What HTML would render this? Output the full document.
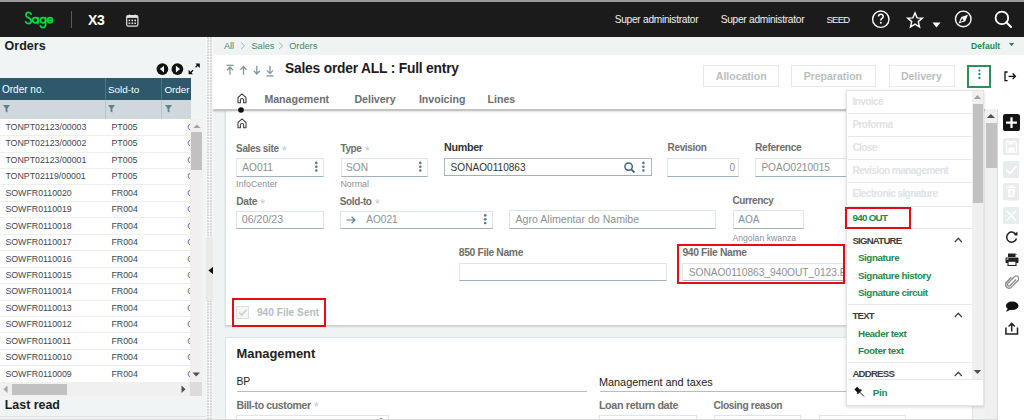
<!DOCTYPE html>
<html><head><meta charset="utf-8"><style>
html,body{margin:0;padding:0;}
body{width:1024px;height:420px;overflow:hidden;position:relative;background:#fff;font-family:"Liberation Sans", sans-serif;}
body>div{position:absolute;white-space:nowrap;}
</style></head><body>
<div style="left:0px;top:0px;width:1024px;height:2px;background:#9a9a9a;"></div>
<div style="left:0px;top:2px;width:1024px;height:34.5px;background:#1b1b1b;"></div>
<svg style="position:absolute;left:24px;top:11px" width="32" height="19" viewBox="0 0 32 19"><g fill="none" stroke="#00d83a" stroke-width="1.75" stroke-linecap="round"><path d="M7.1 3.1 C6.6 2 5.6 1.4 4.5 1.4 C3 1.4 1.9 2.4 1.9 3.9 C1.9 5.6 3.3 6.3 4.6 6.9 C6.2 7.6 7.2 8.5 7.2 10.1 C7.2 11.6 6 12.6 4.5 12.6 C3 12.6 2 11.8 1.6 10.7"/><circle cx="11.3" cy="9.3" r="2.6"/><path d="M13.9 6.6 L13.9 12.6"/><circle cx="19" cy="9.3" r="2.6"/><path d="M21.6 6.6 L21.6 13.8 C21.6 15.5 20.4 16.6 18.9 16.6 C17.6 16.6 16.7 15.9 16.3 14.9"/><path d="M23.7 9.4 L28.6 9.4 C28.6 7.8 27.5 6.7 26.1 6.7 C24.6 6.7 23.5 7.9 23.5 9.3 C23.5 10.8 24.6 11.9 26.1 11.9 C27 11.9 27.8 11.5 28.3 10.8"/></g></svg>
<div style="left:71px;top:11px;width:1.2px;height:17px;background:#5a5a5a;"></div>
<div style="left:88.00px;top:13.05px;font-size:14px;line-height:14px;color:#ffffff;font-weight:700;letter-spacing:-0.3px;">X3</div>
<svg style="position:absolute;left:125.5px;top:13.5px" width="13" height="13" viewBox="0 0 13 13"><rect x="0.7" y="1.6" width="11.2" height="10.6" rx="1.6" fill="none" stroke="#e2e2e2" stroke-width="1.2"/><rect x="0.7" y="1.6" width="11.2" height="2.3" fill="#e2e2e2"/><circle cx="3.5" cy="1.3" r="0.9" fill="#e2e2e2"/><circle cx="9.1" cy="1.3" r="0.9" fill="#e2e2e2"/><g fill="#e2e2e2"><rect x="2.6" y="5.6" width="1.6" height="1.6"/><rect x="5.5" y="5.6" width="1.6" height="1.6"/><rect x="8.4" y="5.6" width="1.6" height="1.6"/><rect x="2.6" y="8.5" width="1.6" height="1.6"/><rect x="5.5" y="8.5" width="1.6" height="1.6"/><rect x="8.4" y="8.5" width="1.6" height="1.6"/></g></svg>
<div style="left:614.70px;top:14.67px;font-size:10.2px;line-height:10.2px;color:#f2f2f2;font-weight:400;letter-spacing:-0.28px;">Super administrator</div>
<div style="left:720.70px;top:14.67px;font-size:10.2px;line-height:10.2px;color:#f2f2f2;font-weight:400;letter-spacing:-0.28px;">Super administrator</div>
<div style="left:826.40px;top:15.17px;font-size:9.6px;line-height:9.6px;color:#f2f2f2;font-weight:400;letter-spacing:-0.75px;">SEED</div>
<svg style="position:absolute;left:871px;top:10px" width="20" height="20" viewBox="0 0 20 20"><circle cx="9.8" cy="9.2" r="8.2" fill="none" stroke="#fff" stroke-width="1.4"/><path d="M7.4 6.6 C7.4 5.1 8.5 4.3 9.8 4.3 C11.2 4.3 12.2 5.2 12.2 6.5 C12.2 7.6 11.5 8.1 10.8 8.6 C10.1 9.1 9.8 9.5 9.8 10.6" stroke="#fff" stroke-width="1.5" fill="none"/><circle cx="9.8" cy="12.7" r="1" fill="#fff"/></svg>
<svg style="position:absolute;left:904.8px;top:9.8px" width="20" height="20" viewBox="0 0 20 20"><path d="M10 1.6 L12.2 7.1 L17.9 7.4 L13.5 11.1 L14.9 16.9 L10 13.8 L5.1 16.9 L6.5 11.1 L2.1 7.4 L7.8 7.1 Z" transform="translate(10,10.2) scale(0.93) translate(-10,-9.6)" fill="none" stroke="#fff" stroke-width="1.5" stroke-linejoin="miter"/></svg>
<svg style="position:absolute;left:931.5px;top:21.5px" width="9" height="6" viewBox="0 0 9 6"><path d="M0.5 0.5 L8.5 0.5 L4.5 5.5 Z" fill="#fff"/></svg>
<svg style="position:absolute;left:953px;top:10px" width="20" height="20" viewBox="0 0 20 20"><circle cx="10.25" cy="8.9" r="7.8" fill="none" stroke="#fff" stroke-width="1.4"/><path d="M15 4.8 L12.2 11.2 L5.5 13.5 L8.3 7.1 Z" fill="#fff"/><path d="M9.1 8.6 L10.7 10.4 L7.1 11.9 Z" fill="#1b1b1b"/></svg>
<svg style="position:absolute;left:993px;top:9px" width="22" height="22" viewBox="0 0 22 22"><circle cx="8.9" cy="8.9" r="6.3" fill="none" stroke="#fff" stroke-width="1.8"/><path d="M13.3 13.3 L18 18" stroke="#fff" stroke-width="2" stroke-linecap="round"/></svg>
<div style="left:0px;top:36.5px;width:206px;height:383.5px;background:#f1f4f5;"></div>
<div style="left:4.60px;top:40.32px;font-size:12.5px;line-height:12.5px;color:#1c1c1c;font-weight:700;letter-spacing:0px;">Orders</div>
<svg style="position:absolute;left:156px;top:62.5px" width="13" height="13" viewBox="0 0 13 13"><circle cx="6.4" cy="6.1" r="5.9" fill="#111"/><path d="M8 2.8 L3.9 6.1 L8 9.4 Z" fill="#fff"/></svg>
<svg style="position:absolute;left:170.6px;top:62.5px" width="13" height="13" viewBox="0 0 13 13"><circle cx="6.4" cy="6.1" r="5.9" fill="#111"/><path d="M4.9 2.8 L9 6.1 L4.9 9.4 Z" fill="#fff"/></svg>
<svg style="position:absolute;left:188px;top:63px" width="13" height="12" viewBox="0 0 13 12"><path d="M7.6 4.3 L10.2 1.7 M5 7.3 L2.3 10" stroke="#111" stroke-width="1.3" fill="none"/><path d="M7.4 0.6 L11.8 0.6 L11.8 5 Z M0.6 6.8 L0.6 11.2 L5 11.2 Z" fill="#111"/></svg>
<div style="left:0px;top:78px;width:190.7px;height:22px;background:#2e596c;"></div>
<div style="left:105.2px;top:78px;width:1px;height:22px;background:#4f7485;"></div>
<div style="left:161.2px;top:78px;width:1px;height:22px;background:#4f7485;"></div>
<div style="left:2.00px;top:85.34px;font-size:10px;line-height:10px;color:#ffffff;font-weight:400;letter-spacing:0px;">Order no.</div>
<div style="left:108.00px;top:85.42px;font-size:9.9px;line-height:9.9px;color:#ffffff;font-weight:400;letter-spacing:0px;">Sold-to</div>
<div style="left:164.40px;top:85.42px;font-size:9.9px;line-height:9.9px;color:#ffffff;font-weight:400;letter-spacing:0px;width:25.7px;overflow:hidden;">Order</div>
<div style="left:0px;top:100px;width:190.7px;height:18.6px;background:#cfd8dd;"></div>
<div style="left:105.2px;top:100px;width:1px;height:18.6px;background:#b9c6cd;"></div>
<div style="left:161.2px;top:100px;width:1px;height:18.6px;background:#b9c6cd;"></div>
<svg style="position:absolute;left:2.6px;top:105px" width="7" height="8" viewBox="0 0 7 8"><path d="M0 0 L7 0 L4.4 3.6 L4.4 7.6 L2.6 6.6 L2.6 3.6 Z" fill="#5e7f8e"/></svg>
<svg style="position:absolute;left:108.3px;top:105px" width="7" height="8" viewBox="0 0 7 8"><path d="M0 0 L7 0 L4.4 3.6 L4.4 7.6 L2.6 6.6 L2.6 3.6 Z" fill="#5e7f8e"/></svg>
<svg style="position:absolute;left:164.6px;top:105px" width="7" height="8" viewBox="0 0 7 8"><path d="M0 0 L7 0 L4.4 3.6 L4.4 7.6 L2.6 6.6 L2.6 3.6 Z" fill="#5e7f8e"/></svg>
<div style="left:0px;top:118.6px;width:190px;height:263.4px;background:#ffffff;"></div>
<div style="left:0px;top:135.04999999999998px;width:190px;height:1px;background:#eceff1;"></div>
<div style="left:5.40px;top:122.95px;font-size:8.8px;line-height:8.8px;color:#41484c;font-weight:400;letter-spacing:0px;">TONPT02123/00003</div>
<div style="left:111.50px;top:122.95px;font-size:8.8px;line-height:8.8px;color:#41484c;font-weight:400;letter-spacing:0px;">PT005</div>
<div style="left:187.30px;top:122.95px;font-size:8.8px;line-height:8.8px;color:#5d6468;font-weight:400;letter-spacing:0px;width:2.6px;overflow:hidden;">C</div>
<div style="left:0px;top:151.49999999999997px;width:190px;height:1px;background:#eceff1;"></div>
<div style="left:5.40px;top:139.40px;font-size:8.8px;line-height:8.8px;color:#41484c;font-weight:400;letter-spacing:0px;">TONPT02123/00002</div>
<div style="left:111.50px;top:139.40px;font-size:8.8px;line-height:8.8px;color:#41484c;font-weight:400;letter-spacing:0px;">PT005</div>
<div style="left:187.30px;top:139.40px;font-size:8.8px;line-height:8.8px;color:#5d6468;font-weight:400;letter-spacing:0px;width:2.6px;overflow:hidden;">C</div>
<div style="left:0px;top:167.95px;width:190px;height:1px;background:#eceff1;"></div>
<div style="left:5.40px;top:155.85px;font-size:8.8px;line-height:8.8px;color:#41484c;font-weight:400;letter-spacing:0px;">TONPT02123/00001</div>
<div style="left:111.50px;top:155.85px;font-size:8.8px;line-height:8.8px;color:#41484c;font-weight:400;letter-spacing:0px;">PT005</div>
<div style="left:187.30px;top:155.85px;font-size:8.8px;line-height:8.8px;color:#5d6468;font-weight:400;letter-spacing:0px;width:2.6px;overflow:hidden;">C</div>
<div style="left:0px;top:184.39999999999998px;width:190px;height:1px;background:#eceff1;"></div>
<div style="left:5.40px;top:172.30px;font-size:8.8px;line-height:8.8px;color:#41484c;font-weight:400;letter-spacing:0px;">TONPT02119/00001</div>
<div style="left:111.50px;top:172.30px;font-size:8.8px;line-height:8.8px;color:#41484c;font-weight:400;letter-spacing:0px;">PT005</div>
<div style="left:187.30px;top:172.30px;font-size:8.8px;line-height:8.8px;color:#5d6468;font-weight:400;letter-spacing:0px;width:2.6px;overflow:hidden;">C</div>
<div style="left:0px;top:200.84999999999997px;width:190px;height:1px;background:#eceff1;"></div>
<div style="left:5.40px;top:188.75px;font-size:8.8px;line-height:8.8px;color:#41484c;font-weight:400;letter-spacing:0px;">SOWFR0110020</div>
<div style="left:111.50px;top:188.75px;font-size:8.8px;line-height:8.8px;color:#41484c;font-weight:400;letter-spacing:0px;">FR004</div>
<div style="left:187.30px;top:188.75px;font-size:8.8px;line-height:8.8px;color:#5d6468;font-weight:400;letter-spacing:0px;width:2.6px;overflow:hidden;">C</div>
<div style="left:0px;top:217.29999999999998px;width:190px;height:1px;background:#eceff1;"></div>
<div style="left:5.40px;top:205.20px;font-size:8.8px;line-height:8.8px;color:#41484c;font-weight:400;letter-spacing:0px;">SOWFR0110019</div>
<div style="left:111.50px;top:205.20px;font-size:8.8px;line-height:8.8px;color:#41484c;font-weight:400;letter-spacing:0px;">FR004</div>
<div style="left:187.30px;top:205.20px;font-size:8.8px;line-height:8.8px;color:#5d6468;font-weight:400;letter-spacing:0px;width:2.6px;overflow:hidden;">C</div>
<div style="left:0px;top:233.74999999999997px;width:190px;height:1px;background:#eceff1;"></div>
<div style="left:5.40px;top:221.65px;font-size:8.8px;line-height:8.8px;color:#41484c;font-weight:400;letter-spacing:0px;">SOWFR0110018</div>
<div style="left:111.50px;top:221.65px;font-size:8.8px;line-height:8.8px;color:#41484c;font-weight:400;letter-spacing:0px;">FR004</div>
<div style="left:187.30px;top:221.65px;font-size:8.8px;line-height:8.8px;color:#5d6468;font-weight:400;letter-spacing:0px;width:2.6px;overflow:hidden;">C</div>
<div style="left:0px;top:250.2px;width:190px;height:1px;background:#eceff1;"></div>
<div style="left:5.40px;top:238.10px;font-size:8.8px;line-height:8.8px;color:#41484c;font-weight:400;letter-spacing:0px;">SOWFR0110017</div>
<div style="left:111.50px;top:238.10px;font-size:8.8px;line-height:8.8px;color:#41484c;font-weight:400;letter-spacing:0px;">FR004</div>
<div style="left:187.30px;top:238.10px;font-size:8.8px;line-height:8.8px;color:#5d6468;font-weight:400;letter-spacing:0px;width:2.6px;overflow:hidden;">C</div>
<div style="left:0px;top:266.65px;width:190px;height:1px;background:#eceff1;"></div>
<div style="left:5.40px;top:254.55px;font-size:8.8px;line-height:8.8px;color:#41484c;font-weight:400;letter-spacing:0px;">SOWFR0110016</div>
<div style="left:111.50px;top:254.55px;font-size:8.8px;line-height:8.8px;color:#41484c;font-weight:400;letter-spacing:0px;">FR004</div>
<div style="left:187.30px;top:254.55px;font-size:8.8px;line-height:8.8px;color:#5d6468;font-weight:400;letter-spacing:0px;width:2.6px;overflow:hidden;">C</div>
<div style="left:0px;top:283.09999999999997px;width:190px;height:1px;background:#eceff1;"></div>
<div style="left:5.40px;top:271.00px;font-size:8.8px;line-height:8.8px;color:#41484c;font-weight:400;letter-spacing:0px;">SOWFR0110015</div>
<div style="left:111.50px;top:271.00px;font-size:8.8px;line-height:8.8px;color:#41484c;font-weight:400;letter-spacing:0px;">FR004</div>
<div style="left:187.30px;top:271.00px;font-size:8.8px;line-height:8.8px;color:#5d6468;font-weight:400;letter-spacing:0px;width:2.6px;overflow:hidden;">C</div>
<div style="left:0px;top:299.55px;width:190px;height:1px;background:#eceff1;"></div>
<div style="left:5.40px;top:287.45px;font-size:8.8px;line-height:8.8px;color:#41484c;font-weight:400;letter-spacing:0px;">SOWFR0110014</div>
<div style="left:111.50px;top:287.45px;font-size:8.8px;line-height:8.8px;color:#41484c;font-weight:400;letter-spacing:0px;">FR004</div>
<div style="left:187.30px;top:287.45px;font-size:8.8px;line-height:8.8px;color:#5d6468;font-weight:400;letter-spacing:0px;width:2.6px;overflow:hidden;">C</div>
<div style="left:0px;top:315.99999999999994px;width:190px;height:1px;background:#eceff1;"></div>
<div style="left:5.40px;top:303.90px;font-size:8.8px;line-height:8.8px;color:#41484c;font-weight:400;letter-spacing:0px;">SOWFR0110013</div>
<div style="left:111.50px;top:303.90px;font-size:8.8px;line-height:8.8px;color:#41484c;font-weight:400;letter-spacing:0px;">FR004</div>
<div style="left:187.30px;top:303.90px;font-size:8.8px;line-height:8.8px;color:#5d6468;font-weight:400;letter-spacing:0px;width:2.6px;overflow:hidden;">C</div>
<div style="left:0px;top:332.45px;width:190px;height:1px;background:#eceff1;"></div>
<div style="left:5.40px;top:320.35px;font-size:8.8px;line-height:8.8px;color:#41484c;font-weight:400;letter-spacing:0px;">SOWFR0110012</div>
<div style="left:111.50px;top:320.35px;font-size:8.8px;line-height:8.8px;color:#41484c;font-weight:400;letter-spacing:0px;">FR004</div>
<div style="left:187.30px;top:320.35px;font-size:8.8px;line-height:8.8px;color:#5d6468;font-weight:400;letter-spacing:0px;width:2.6px;overflow:hidden;">C</div>
<div style="left:0px;top:348.9px;width:190px;height:1px;background:#eceff1;"></div>
<div style="left:5.40px;top:336.80px;font-size:8.8px;line-height:8.8px;color:#41484c;font-weight:400;letter-spacing:0px;">SOWFR0110011</div>
<div style="left:111.50px;top:336.80px;font-size:8.8px;line-height:8.8px;color:#41484c;font-weight:400;letter-spacing:0px;">FR004</div>
<div style="left:187.30px;top:336.80px;font-size:8.8px;line-height:8.8px;color:#5d6468;font-weight:400;letter-spacing:0px;width:2.6px;overflow:hidden;">C</div>
<div style="left:0px;top:365.34999999999997px;width:190px;height:1px;background:#eceff1;"></div>
<div style="left:5.40px;top:353.25px;font-size:8.8px;line-height:8.8px;color:#41484c;font-weight:400;letter-spacing:0px;">SOWFR0110010</div>
<div style="left:111.50px;top:353.25px;font-size:8.8px;line-height:8.8px;color:#41484c;font-weight:400;letter-spacing:0px;">FR004</div>
<div style="left:187.30px;top:353.25px;font-size:8.8px;line-height:8.8px;color:#5d6468;font-weight:400;letter-spacing:0px;width:2.6px;overflow:hidden;">C</div>
<div style="left:0px;top:381.8px;width:190px;height:1px;background:#eceff1;"></div>
<div style="left:5.40px;top:369.70px;font-size:8.8px;line-height:8.8px;color:#41484c;font-weight:400;letter-spacing:0px;">SOWFR0110009</div>
<div style="left:111.50px;top:369.70px;font-size:8.8px;line-height:8.8px;color:#41484c;font-weight:400;letter-spacing:0px;">FR004</div>
<div style="left:187.30px;top:369.70px;font-size:8.8px;line-height:8.8px;color:#5d6468;font-weight:400;letter-spacing:0px;width:2.6px;overflow:hidden;">C</div>
<div style="left:190px;top:118.6px;width:12.4px;height:263.4px;background:#f0f0f0;"></div>
<svg style="position:absolute;left:192.5px;top:123.8px" width="8" height="5" viewBox="0 0 8 5"><path d="M0.3 4 L3.9 0.4 L7.5 4 Z" fill="#a3a3a3"/></svg>
<div style="left:190.8px;top:132px;width:10.8px;height:38px;background:#c1c1c1;"></div>
<svg style="position:absolute;left:192px;top:371px" width="9" height="7" viewBox="0 0 9 7"><path d="M0.5 1.5 L8 1.5 L4.2 5.5 Z" fill="#505050"/></svg>
<div style="left:0px;top:381.5px;width:190px;height:14px;background:#f0f0f0;"></div>
<div style="left:12.2px;top:383.8px;width:55px;height:11px;background:#c1c1c1;"></div>
<svg style="position:absolute;left:2px;top:384.5px" width="7" height="9" viewBox="0 0 7 9"><path d="M5.5 0.5 L5.5 8 L1.5 4.2 Z" fill="#a3a3a3"/></svg>
<svg style="position:absolute;left:180px;top:384.5px" width="7" height="9" viewBox="0 0 7 9"><path d="M1.5 0.5 L1.5 8 L5.5 4.2 Z" fill="#505050"/></svg>
<div style="left:190px;top:381.5px;width:12.4px;height:14px;background:#dcdcdc;"></div>
<div style="left:4.80px;top:399.10px;font-size:12.4px;line-height:12.4px;color:#1c1c1c;font-weight:700;letter-spacing:0px;">Last read</div>
<div style="left:0px;top:416px;width:206px;height:1px;background:#dfe4e7;"></div>
<div style="left:206px;top:36.5px;width:7px;height:383.5px;background:#f9fafb;"></div>
<div style="left:207px;top:36.5px;width:5px;height:383.5px;background-image:radial-gradient(circle at 1px 1.2px,#cfcfcf 0.8px,transparent 1.1px),radial-gradient(circle at 1px 1.2px,#cfcfcf 0.8px,transparent 1.1px);background-size:3px 2.86px,3px 2.86px;background-position:0 0,3px 0;background-repeat:repeat-y,repeat-y;"></div>
<div style="left:206px;top:238px;width:7.3px;height:63px;background:#ebeae9;"></div>
<svg style="position:absolute;left:207.5px;top:265.5px" width="6" height="9" viewBox="0 0 6 9"><path d="M5.8 0.3 L5.8 8.7 L0.4 4.5 Z" fill="#111"/></svg>
<div style="left:213px;top:36.5px;width:811px;height:18px;background:#f0f3f4;"></div>
<div style="left:223.90px;top:41.81px;font-size:9.2px;line-height:9.2px;color:#3c8c6a;font-weight:400;letter-spacing:0px;">All</div>
<svg style="position:absolute;left:240px;top:42px" width="6" height="8" viewBox="0 0 6 8"><path d="M1 0.5 L4.6 3.8 L1 7.1" stroke="#aab4b8" stroke-width="1" fill="none"/></svg>
<div style="left:251.40px;top:41.81px;font-size:9.2px;line-height:9.2px;color:#3c8c6a;font-weight:400;letter-spacing:0px;">Sales</div>
<svg style="position:absolute;left:278px;top:42px" width="6" height="8" viewBox="0 0 6 8"><path d="M1 0.5 L4.6 3.8 L1 7.1" stroke="#aab4b8" stroke-width="1" fill="none"/></svg>
<div style="left:289.20px;top:41.81px;font-size:9.2px;line-height:9.2px;color:#3c8c6a;font-weight:400;letter-spacing:0px;">Orders</div>
<div style="left:971.10px;top:41.62px;font-size:8.6px;line-height:8.6px;color:#1e8a4e;font-weight:700;letter-spacing:0px;">Default</div>
<svg style="position:absolute;left:1008.5px;top:43px" width="6" height="4" viewBox="0 0 6 4"><path d="M0 0 L5.2 0 L2.6 3.2 Z" fill="#1e8a4e"/></svg>
<div style="left:213px;top:54.5px;width:811px;height:55px;background:#ffffff;"></div>
<svg style="position:absolute;left:226px;top:64px" width="9" height="12" viewBox="0 0 9 12"><path d="M0.5 1.3 L7.5 1.3" stroke="#7b98a5" stroke-width="1.3"/><path d="M4 3 L4 10.8 M1 6.2 L4 3 L7 6.2" stroke="#7b98a5" stroke-width="1.3" fill="none"/></svg>
<svg style="position:absolute;left:239.5px;top:65px" width="8" height="11" viewBox="0 0 8 11"><path d="M3.5 1.5 L3.5 9.8 M0.5 4.7 L3.5 1.5 L6.5 4.7" stroke="#7b98a5" stroke-width="1.3" fill="none"/></svg>
<svg style="position:absolute;left:252.5px;top:65px" width="8" height="11" viewBox="0 0 8 11"><path d="M3.8 0.8 L3.8 9 M0.8 5.8 L3.8 9 L6.8 5.8" stroke="#7b98a5" stroke-width="1.3" fill="none"/></svg>
<svg style="position:absolute;left:265.5px;top:65px" width="9" height="12" viewBox="0 0 9 12"><path d="M4 0.8 L4 8.6 M1 5.4 L4 8.6 L7 5.4" stroke="#7b98a5" stroke-width="1.3" fill="none"/><path d="M0.5 10.9 L7.5 10.9" stroke="#7b98a5" stroke-width="1.3"/></svg>
<div style="left:285.00px;top:62.02px;font-size:13.8px;line-height:13.8px;color:#1c1c1c;font-weight:700;letter-spacing:-0.2px;">Sales order ALL : Full entry</div>
<div style="left:998.2px;top:54.5px;width:25.8px;height:365.5px;background:#ffffff;"></div>
<div style="left:703.4px;top:65px;width:75.5px;height:21.5px;border:1px solid #e4eaed;box-sizing:border-box;background:#fff"></div>
<div style="left:715.80px;top:71.11px;font-size:10.5px;line-height:10.5px;color:#b8bfc3;font-weight:700;letter-spacing:0px;">Allocation</div>
<div style="left:791.4px;top:65px;width:85px;height:21.5px;border:1px solid #e4eaed;box-sizing:border-box;background:#fff"></div>
<div style="left:803.70px;top:71.11px;font-size:10.5px;line-height:10.5px;color:#b8bfc3;font-weight:700;letter-spacing:0px;">Preparation</div>
<div style="left:888.9px;top:65px;width:66.2px;height:21.5px;border:1px solid #e4eaed;box-sizing:border-box;background:#fff"></div>
<div style="left:900.90px;top:71.11px;font-size:10.5px;line-height:10.5px;color:#b8bfc3;font-weight:700;letter-spacing:0px;">Delivery</div>
<div style="left:967px;top:65px;width:24.4px;height:22.6px;border:2px solid #2a9258;box-sizing:border-box;background:#fff"></div>
<svg style="position:absolute;left:977px;top:68px" width="5" height="12" viewBox="0 0 5 12"><circle cx="2.4" cy="2.5" r="1.1" fill="#1a7f66"/><circle cx="2.4" cy="6.2" r="1.1" fill="#1a7f66"/><circle cx="2.4" cy="9.9" r="1.1" fill="#1a7f66"/></svg>
<svg style="position:absolute;left:1004px;top:71px" width="14" height="12" viewBox="0 0 14 12"><path d="M3.6 1 L1 1 L1 9.6 L3.6 9.6" stroke="#111" stroke-width="1.3" fill="none"/><path d="M4.6 5.3 L11.4 5.3 M8.6 2.5 L11.4 5.3 L8.6 8.1" stroke="#111" stroke-width="1.3" fill="none"/></svg>
<svg style="position:absolute;left:236.5px;top:92.5px" width="10" height="11" viewBox="0 0 10 11"><path d="M1 9.8 L1 4.6 L5 0.9 L9 4.6 L9 9.8 L6.6 9.8 L6.6 7.2 Q6.6 5.5 5 5.5 Q3.4 5.5 3.4 7.2 L3.4 9.8 Z" fill="none" stroke="#3a3a3a" stroke-width="1.05" stroke-linejoin="miter"/></svg>
<div style="left:264.40px;top:94.43px;font-size:10.6px;line-height:10.6px;color:#6c6e72;font-weight:700;letter-spacing:0px;">Management</div>
<div style="left:354.40px;top:94.43px;font-size:10.6px;line-height:10.6px;color:#6c6e72;font-weight:700;letter-spacing:0px;">Delivery</div>
<div style="left:418.90px;top:94.43px;font-size:10.6px;line-height:10.6px;color:#6c6e72;font-weight:700;letter-spacing:0px;">Invoicing</div>
<div style="left:487.60px;top:94.43px;font-size:10.6px;line-height:10.6px;color:#6c6e72;font-weight:700;letter-spacing:0px;">Lines</div>
<div style="left:213px;top:109.5px;width:772px;height:310.5px;background:#f0f3f4;"></div>
<div style="left:224.5px;top:110px;width:748.5px;height:216.2px;background:#fff;border:1px solid #dde3e6;border-top:none;border-bottom:1.2px solid #cfd1d2;box-sizing:border-box;box-shadow:0 1px 1.5px rgba(0,0,0,0.14)"></div>
<div style="left:213px;top:109.2px;width:772px;height:1.6px;background:#c4c4c4;box-shadow:0 1px 2px rgba(0,0,0,0.13)"></div>
<svg style="position:absolute;left:237.5px;top:106.8px" width="6" height="6" viewBox="0 0 6 6"><circle cx="3" cy="3" r="2.8" fill="#111"/></svg>
<svg style="position:absolute;left:236.5px;top:118px" width="10" height="11" viewBox="0 0 10 11"><path d="M1 9.8 L1 4.6 L5 0.9 L9 4.6 L9 9.8 L6.6 9.8 L6.6 7.2 Q6.6 5.5 5 5.5 Q3.4 5.5 3.4 7.2 L3.4 9.8 Z" fill="none" stroke="#3a3a3a" stroke-width="1.05" stroke-linejoin="miter"/></svg>
<div style="left:236.10px;top:142.84px;font-size:9.9975px;line-height:9.9975px;color:#6e6e6e;font-weight:700;letter-spacing:-0.35px;">Sales site<span style="color:#c5cbce;font-weight:400;font-size:13.5px;margin-left:3px;position:relative;top:2.8px">*</span></div>
<div style="left:236.3px;top:158.1px;width:87.3px;height:18.6px;background:#fff;border:1px solid #dfe6e9;border-bottom:1.2px solid #9fb3bd;box-sizing:border-box"></div>
<div style="left:242.30px;top:163.05px;font-size:10.1px;line-height:10.1px;color:#8b9195;font-weight:400;letter-spacing:0px;">AO011</div>
<svg style="position:absolute;left:313px;top:159px" width="7" height="15" viewBox="0 0 7 15"><circle cx="3.30" cy="3.90" r="1.3" fill="#54798c"/><circle cx="3.30" cy="7.70" r="1.3" fill="#54798c"/><circle cx="3.30" cy="11.50" r="1.3" fill="#54798c"/></svg>
<div style="left:236.10px;top:180.47px;font-size:8.9px;line-height:8.9px;color:#8b9195;font-weight:400;letter-spacing:0px;">InfoCenter</div>
<div style="left:340.40px;top:142.84px;font-size:9.9975px;line-height:9.9975px;color:#6e6e6e;font-weight:700;letter-spacing:-0.35px;">Type<span style="color:#c5cbce;font-weight:400;font-size:13.5px;margin-left:3px;position:relative;top:2.8px">*</span></div>
<div style="left:340.6px;top:158.1px;width:87.1px;height:18.6px;background:#fff;border:1px solid #dfe6e9;border-bottom:1.2px solid #9fb3bd;box-sizing:border-box"></div>
<div style="left:346.10px;top:163.05px;font-size:10.1px;line-height:10.1px;color:#8b9195;font-weight:400;letter-spacing:0px;">SON</div>
<svg style="position:absolute;left:417px;top:159px" width="7" height="15" viewBox="0 0 7 15"><circle cx="3.30" cy="3.90" r="1.3" fill="#54798c"/><circle cx="3.30" cy="7.70" r="1.3" fill="#54798c"/><circle cx="3.30" cy="11.50" r="1.3" fill="#54798c"/></svg>
<div style="left:340.40px;top:180.47px;font-size:8.9px;line-height:8.9px;color:#8b9195;font-weight:400;letter-spacing:0px;">Normal</div>
<div style="left:444.10px;top:142.20px;font-size:10.75px;line-height:10.75px;color:#333;font-weight:700;letter-spacing:-0.35px;">Number</div>
<div style="left:444.2px;top:158.3px;width:207.4px;height:18.2px;background:#fff;border:1px solid #a9bac2;border-bottom:1.2px solid #9fb1ba;box-sizing:border-box"></div>
<div style="left:450.60px;top:163.05px;font-size:10.1px;line-height:10.1px;color:#333;font-weight:400;letter-spacing:0px;">SONAO0110863</div>
<svg style="position:absolute;left:623.5px;top:161.5px" width="12" height="12" viewBox="0 0 12 12"><circle cx="4.6" cy="4.6" r="3.7" fill="none" stroke="#3f6677" stroke-width="1.5"/><path d="M7.3 7.3 L10.5 10.5" stroke="#3f6677" stroke-width="1.8"/></svg>
<svg style="position:absolute;left:640px;top:159px" width="7" height="15" viewBox="0 0 7 15"><circle cx="3.40" cy="3.90" r="1.3" fill="#54798c"/><circle cx="3.40" cy="7.70" r="1.3" fill="#54798c"/><circle cx="3.40" cy="11.50" r="1.3" fill="#54798c"/></svg>
<div style="left:667.60px;top:142.84px;font-size:9.9975px;line-height:9.9975px;color:#6e6e6e;font-weight:700;letter-spacing:-0.35px;">Revision</div>
<div style="left:667.4px;top:158px;width:71.7px;height:18.5px;background:#fff;border:1px solid #dfe6e9;border-bottom:1.2px solid #9fb3bd;box-sizing:border-box"></div>
<div style="left:729.40px;top:163.05px;font-size:10.1px;line-height:10.1px;color:#8b9195;font-weight:400;letter-spacing:0px;">0</div>
<div style="left:755.10px;top:142.66px;font-size:10.2125px;line-height:10.2125px;color:#6e6e6e;font-weight:700;letter-spacing:-0.35px;">Reference</div>
<div style="left:755px;top:158px;width:100px;height:18.5px;background:#fff;border:1px solid #dfe6e9;border-bottom:1.2px solid #9fb3bd;box-sizing:border-box"></div>
<div style="left:761.40px;top:163.05px;font-size:10.1px;line-height:10.1px;color:#8b9195;font-weight:400;letter-spacing:0px;">POAO0210015</div>
<div style="left:236.30px;top:196.06px;font-size:10.2125px;line-height:10.2125px;color:#6e6e6e;font-weight:700;letter-spacing:-0.35px;">Date<span style="color:#c5cbce;font-weight:400;font-size:13.5px;margin-left:3px;position:relative;top:2.8px">*</span></div>
<div style="left:236.4px;top:210.6px;width:87.2px;height:18.4px;background:#fff;border:1px solid #dfe6e9;border-bottom:1.2px solid #9fb3bd;box-sizing:border-box"></div>
<div style="left:241.80px;top:214.23px;font-size:10.6px;line-height:10.6px;color:#8b9195;font-weight:400;letter-spacing:0px;">06/20/23</div>
<div style="left:339.70px;top:195.84px;font-size:9.9975px;line-height:9.9975px;color:#6e6e6e;font-weight:700;letter-spacing:-0.35px;">Sold-to<span style="color:#c5cbce;font-weight:400;font-size:13.5px;margin-left:3px;position:relative;top:2.8px">*</span></div>
<div style="left:340.3px;top:210.6px;width:152.3px;height:18.4px;background:#fff;border:1px solid #dfe6e9;border-bottom:1.2px solid #9fb3bd;box-sizing:border-box"></div>
<svg style="position:absolute;left:345.5px;top:216px" width="11" height="8" viewBox="0 0 11 8"><path d="M0.5 4 L9 4 M5.6 0.8 L9 4 L5.6 7.2" stroke="#5a8092" stroke-width="1.2" fill="none"/></svg>
<div style="left:366.20px;top:214.65px;font-size:10.1px;line-height:10.1px;color:#8b9195;font-weight:400;letter-spacing:0px;">AO021</div>
<svg style="position:absolute;left:482px;top:212px" width="7" height="15" viewBox="0 0 7 15"><circle cx="3.20" cy="3.40" r="1.3" fill="#54798c"/><circle cx="3.20" cy="7.20" r="1.3" fill="#54798c"/><circle cx="3.20" cy="11.00" r="1.3" fill="#54798c"/></svg>
<div style="left:508.8px;top:210.3px;width:207.4px;height:18.7px;background:#fff;border:1px solid #dfe6e9;border-bottom:1.2px solid #9fb3bd;box-sizing:border-box"></div>
<div style="left:515.50px;top:214.23px;font-size:10.6px;line-height:10.6px;color:#8b9195;font-weight:400;letter-spacing:0px;">Agro Alimentar do Namibe</div>
<div style="left:732.40px;top:195.64px;font-size:9.9975px;line-height:9.9975px;color:#6e6e6e;font-weight:700;letter-spacing:-0.35px;">Currency</div>
<div style="left:733px;top:210.3px;width:70.5px;height:18.7px;background:#fff;border:1px solid #dfe6e9;border-bottom:1.2px solid #9fb3bd;box-sizing:border-box"></div>
<div style="left:738.20px;top:214.65px;font-size:10.1px;line-height:10.1px;color:#8b9195;font-weight:400;letter-spacing:0px;">AOA</div>
<div style="left:732.40px;top:233.74px;font-size:8.7px;line-height:8.7px;color:#8b9195;font-weight:400;letter-spacing:0px;">Angolan kwanza</div>
<div style="left:458.80px;top:247.76px;font-size:10.319999999999999px;line-height:10.319999999999999px;color:#6e6e6e;font-weight:700;letter-spacing:-0.35px;">850 File Name</div>
<div style="left:459px;top:262.5px;width:207.8px;height:18px;background:#fff;border:1px solid #dfe6e9;border-bottom:1.2px solid #9fb3bd;box-sizing:border-box"></div>
<div style="left:682.40px;top:247.66px;font-size:10.319999999999999px;line-height:10.319999999999999px;color:#6e6e6e;font-weight:700;letter-spacing:-0.35px;">940 File Name</div>
<div style="left:681.9px;top:263px;width:175px;height:17.5px;background:#fff;border:1px solid #dfe6e9;border-bottom:1.2px solid #9fb3bd;box-sizing:border-box"></div>
<div style="left:688.70px;top:268.27px;font-size:10.2px;line-height:10.2px;color:#8b9195;font-weight:400;letter-spacing:0px;width:154px;overflow:hidden;">SONAO0110863_940OUT_0123.EDI</div>
<div style="left:676.6px;top:244.2px;width:168.6px;height:40.2px;border:2.6px solid #e50c16;box-sizing:border-box"></div>
<div style="left:236px;top:306px;width:12.8px;height:12.8px;border:1px solid #d8e0e4;box-sizing:border-box;background:#f4f6f7"></div>
<svg style="position:absolute;left:237.5px;top:308px" width="10" height="9" viewBox="0 0 10 9"><path d="M1.2 4.6 L3.8 7 L8.6 1.8" stroke="#c8d1d6" stroke-width="1.6" fill="none"/></svg>
<div style="left:256.90px;top:307.87px;font-size:10.2px;line-height:10.2px;color:#b7bec2;font-weight:700;letter-spacing:0px;">940 File Sent</div>
<div style="left:231.9px;top:298.1px;width:94.1px;height:28.6px;border:2.6px solid #e50c16;box-sizing:border-box"></div>
<div style="left:224.5px;top:337.3px;width:748.5px;height:90px;background:#fff;border:1px solid #dde3e6;box-sizing:border-box"></div>
<div style="left:236.50px;top:348.48px;font-size:12.9px;line-height:12.9px;color:#222;font-weight:700;letter-spacing:0px;">Management</div>
<div style="left:236.40px;top:377.20px;font-size:10.4px;line-height:10.4px;color:#222;font-weight:400;letter-spacing:0px;">BP</div>
<div style="left:237px;top:390.8px;width:350px;height:1.4px;background:#b9bdbf;"></div>
<div style="left:598.90px;top:376.77px;font-size:10.9px;line-height:10.9px;color:#222;font-weight:400;letter-spacing:0px;">Management and taxes</div>
<div style="left:599.5px;top:390.8px;width:373px;height:1.4px;background:#b9bdbf;"></div>
<div style="left:236.40px;top:399.58px;font-size:10.535px;line-height:10.535px;color:#6e6e6e;font-weight:700;letter-spacing:-0.35px;">Bill-to customer<span style="color:#c5cbce;font-weight:400;font-size:13.5px;margin-left:3px;position:relative;top:2.8px">*</span></div>
<div style="left:236.3px;top:414.6px;width:152.3px;height:18px;background:#fff;border:1px solid #dfe6e9;border-bottom:1.2px solid #9fb3bd;box-sizing:border-box"></div>
<svg style="position:absolute;left:378px;top:416px" width="7" height="15" viewBox="0 0 7 15"><circle cx="3.20" cy="3.40" r="1.3" fill="#54798c"/><circle cx="3.20" cy="7.20" r="1.3" fill="#54798c"/><circle cx="3.20" cy="11.00" r="1.3" fill="#54798c"/></svg>
<div style="left:598.90px;top:400.10px;font-size:10.75px;line-height:10.75px;color:#6e6e6e;font-weight:700;letter-spacing:-0.35px;">Loan return date</div>
<div style="left:599.3px;top:414.6px;width:98px;height:18px;background:#fff;border:1px solid #dfe6e9;border-bottom:1.2px solid #9fb3bd;box-sizing:border-box"></div>
<div style="left:713.40px;top:400.56px;font-size:10.2125px;line-height:10.2125px;color:#6e6e6e;font-weight:700;letter-spacing:-0.35px;">Closing reason</div>
<div style="left:713.9px;top:414.6px;width:87.4px;height:18px;background:#fff;border:1px solid #dfe6e9;border-bottom:1.2px solid #9fb3bd;box-sizing:border-box"></div>
<div style="left:818.6px;top:414.6px;width:87px;height:18px;background:#fff;border:1px solid #dfe6e9;border-bottom:1.2px solid #9fb3bd;box-sizing:border-box"></div>
<div style="left:845.9px;top:89.8px;width:138.5px;height:316px;background:#fff;border:1px solid #e2e4e5;box-sizing:border-box;box-shadow:0 1px 3px rgba(0,0,0,0.16)"></div>
<div style="left:852.40px;top:96.85px;font-size:10.1px;line-height:10.1px;color:#dde3e6;font-weight:700;letter-spacing:-0.6px;">Invoice</div>
<div style="left:847.5px;top:113.1px;width:124.5px;height:1px;background:#e6eaec;"></div>
<div style="left:852.40px;top:119.95px;font-size:10.1px;line-height:10.1px;color:#dde3e6;font-weight:700;letter-spacing:-0.6px;">Proforma</div>
<div style="left:847.5px;top:136.2px;width:124.5px;height:1px;background:#e6eaec;"></div>
<div style="left:852.40px;top:143.05px;font-size:10.1px;line-height:10.1px;color:#dde3e6;font-weight:700;letter-spacing:-0.6px;">Close</div>
<div style="left:847.5px;top:159.29999999999998px;width:124.5px;height:1px;background:#e6eaec;"></div>
<div style="left:852.40px;top:166.15px;font-size:10.1px;line-height:10.1px;color:#dde3e6;font-weight:700;letter-spacing:-0.6px;">Revision management</div>
<div style="left:847.5px;top:182.4px;width:124.5px;height:1px;background:#e6eaec;"></div>
<div style="left:852.40px;top:189.25px;font-size:10.1px;line-height:10.1px;color:#dde3e6;font-weight:700;letter-spacing:-0.6px;">Electronic signature</div>
<div style="left:847.5px;top:205.5px;width:124.5px;height:1px;background:#e6eaec;"></div>
<div style="left:852.40px;top:213.40px;font-size:9.8px;line-height:9.8px;color:#1a8a4a;font-weight:700;letter-spacing:-0.7px;">940 OUT</div>
<div style="left:847.5px;top:228.4px;width:124.5px;height:1px;background:#e6eaec;"></div>
<div style="left:845.2px;top:206.5px;width:66.2px;height:22px;border:2.6px solid #e50c16;box-sizing:border-box"></div>
<div style="left:852.40px;top:235.67px;font-size:9.6px;line-height:9.6px;color:#3d3d3d;font-weight:700;letter-spacing:-0.75px;">SIGNATURE</div>
<svg style="position:absolute;left:953.5px;top:237px" width="9" height="6" viewBox="0 0 9 6"><path d="M0.8 5 L4.3 1.3 L7.8 5" stroke="#444" stroke-width="1.3" fill="none"/></svg>
<div style="left:858.00px;top:253.40px;font-size:9.8px;line-height:9.8px;color:#1e8a4e;font-weight:700;letter-spacing:-0.45px;">Signature</div>
<div style="left:858.00px;top:270.70px;font-size:9.8px;line-height:9.8px;color:#1e8a4e;font-weight:700;letter-spacing:-0.45px;">Signature history</div>
<div style="left:858.00px;top:287.80px;font-size:9.8px;line-height:9.8px;color:#1e8a4e;font-weight:700;letter-spacing:-0.45px;">Signature circuit</div>
<div style="left:847.5px;top:304.2px;width:124.5px;height:1px;background:#e6eaec;"></div>
<div style="left:852.40px;top:310.77px;font-size:9.6px;line-height:9.6px;color:#3d3d3d;font-weight:700;letter-spacing:-0.75px;">TEXT</div>
<svg style="position:absolute;left:953.5px;top:312px" width="9" height="6" viewBox="0 0 9 6"><path d="M0.8 5 L4.3 1.3 L7.8 5" stroke="#444" stroke-width="1.3" fill="none"/></svg>
<div style="left:858.00px;top:329.20px;font-size:9.8px;line-height:9.8px;color:#1e8a4e;font-weight:700;letter-spacing:-0.45px;">Header text</div>
<div style="left:858.00px;top:346.40px;font-size:9.8px;line-height:9.8px;color:#1e8a4e;font-weight:700;letter-spacing:-0.45px;">Footer text</div>
<div style="left:847.5px;top:362.2px;width:124.5px;height:1px;background:#e6eaec;"></div>
<div style="left:847.5px;top:363px;width:124.5px;height:16px;overflow:hidden;background:#fff"></div>
<div style="left:852.40px;top:368.97px;font-size:9.6px;line-height:9.6px;color:#3d3d3d;font-weight:700;letter-spacing:-0.75px;">ADDRESS</div>
<svg style="position:absolute;left:953.5px;top:370.5px" width="9" height="6" viewBox="0 0 9 6"><path d="M0.8 5 L4.3 1.3 L7.8 5" stroke="#444" stroke-width="1.3" fill="none"/></svg>
<div style="left:847.5px;top:379px;width:136px;height:1px;background:#e4e8ea;"></div>
<svg style="position:absolute;left:853px;top:386px" width="14" height="14" viewBox="0 0 14 14"><g transform="translate(3.2,2.6) rotate(-45)"><rect x="-1.9" y="-0.6" width="3.8" height="4.6" fill="#111"/><rect x="-2.9" y="3.6" width="5.8" height="1.6" fill="#111"/><path d="M0 5 L0 11" stroke="#111" stroke-width="0.9"/></g></svg>
<div style="left:872.70px;top:387.52px;font-size:9.9px;line-height:9.9px;color:#1e8a4e;font-weight:700;letter-spacing:-0.2px;">Pin</div>
<div style="left:972px;top:90.5px;width:11.3px;height:288.5px;background:#f0f0f0;"></div>
<svg style="position:absolute;left:973px;top:94px" width="9" height="6" viewBox="0 0 9 6"><path d="M0.8 5 L4.5 1 L8.2 5 Z" fill="#a3a3a3"/></svg>
<div style="left:972.6px;top:103.9px;width:10.2px;height:99.5px;background:#c1c1c1;"></div>
<svg style="position:absolute;left:973px;top:369px" width="9" height="6" viewBox="0 0 9 6"><path d="M0.8 1 L8.2 1 L4.5 5 Z" fill="#505050"/></svg>
<div style="left:985px;top:109px;width:12.2px;height:311px;background:#f0f0f0;"></div>
<div style="left:997.2px;top:109px;width:1px;height:311px;background:#dcdcdc;"></div>
<svg style="position:absolute;left:986px;top:113px" width="10" height="6" viewBox="0 0 10 6"><path d="M0.8 5 L4.9 1 L9 5 Z" fill="#505050"/></svg>
<div style="left:985.6px;top:122.6px;width:11px;height:45.3px;background:#c1c1c1;"></div>
<svg style="position:absolute;left:1003px;top:114.3px" width="17" height="17.2" viewBox="0 0 17 17.2"><rect x="0" y="0" width="17" height="17.2" rx="2.5" fill="#141414"/><path d="M8.5 3.2 L8.5 14 M3.1 8.6 L13.9 8.6" stroke="#fff" stroke-width="2.2"/></svg>
<svg style="position:absolute;left:1002.7px;top:137.6px" width="16.8" height="17.4" viewBox="0 0 16.8 17.4"><rect x="0" y="0" width="16.8" height="17.4" rx="2" fill="#e7ecef"/><path d="M3.5 3.5 L11.5 3.5 L13.5 5.5 L13.5 14 L3.5 14 Z" fill="none" stroke="#fff" stroke-width="1.4"/><rect x="5.5" y="3.5" width="5" height="3" fill="#fff"/><rect x="5.5" y="9.5" width="6" height="4" fill="#fff"/></svg>
<svg style="position:absolute;left:1002.7px;top:160.7px" width="16.8" height="17.4" viewBox="0 0 16.8 17.4"><rect x="0" y="0" width="16.8" height="17.4" rx="2" fill="#e7ecef"/><path d="M3.5 9 L7 12.3 L13.5 5.2" stroke="#fff" stroke-width="1.8" fill="none"/></svg>
<svg style="position:absolute;left:1002.7px;top:183.3px" width="16.8" height="17.4" viewBox="0 0 16.8 17.4"><rect x="0" y="0" width="16.8" height="17.4" rx="2" fill="#e7ecef"/><path d="M3.5 4.5 L13.3 4.5" stroke="#fff" stroke-width="1.4"/><path d="M6.8 4.3 L6.8 3 L10 3 L10 4.3" stroke="#fff" stroke-width="1.2" fill="none"/><path d="M4.8 6 L5.4 14 L11.4 14 L12 6 Z" fill="#fff"/><path d="M7 7.3 L7 12.8 M8.4 7.3 L8.4 12.8 M9.8 7.3 L9.8 12.8" stroke="#e7ecef" stroke-width="0.8"/></svg>
<svg style="position:absolute;left:1002.7px;top:206.7px" width="16.8" height="17.4" viewBox="0 0 16.8 17.4"><rect x="0" y="0" width="16.8" height="17.4" rx="2" fill="#e7ecef"/><path d="M3.7 3.7 L13.1 13.7 M13.1 3.7 L3.7 13.7" stroke="#fff" stroke-width="1.4"/></svg>
<svg style="position:absolute;left:1004.5px;top:230px" width="14" height="13" viewBox="0 0 14 13"><path d="M11.3 5.2 A5 5 0 1 0 11.5 8.5" stroke="#222" stroke-width="1.5" fill="none"/><path d="M8.8 4.9 L12.6 5.4 L12.4 1.4 Z" fill="#222"/></svg>
<svg style="position:absolute;left:1004.5px;top:252.5px" width="14" height="13" viewBox="0 0 14 13"><rect x="3" y="0.5" width="7.5" height="3.5" fill="#222"/><path d="M10.5 0.5 L12 2 L10.5 2 Z" fill="#222"/><rect x="0.5" y="4.5" width="13" height="5.5" rx="1" fill="#222"/><rect x="3" y="8.2" width="8" height="4.3" fill="#fff" stroke="#222" stroke-width="1.1"/><rect x="1.5" y="5.6" width="2" height="1" fill="#fff"/></svg>
<svg style="position:absolute;left:1004.5px;top:274px" width="14" height="15" viewBox="0 0 14 15"><path d="M10.5 4.5 L4.6 10.6 A1.6 1.6 0 0 1 2.3 8.3 L8.8 1.8 A2.6 2.6 0 0 1 12.5 5.5 L5.6 12.5 A3.6 3.6 0 0 1 0.7 7.4 L5.8 2.3" stroke="#8f8f8f" stroke-width="1.4" fill="none" transform="translate(0.5,1)"/></svg>
<svg style="position:absolute;left:1004.5px;top:300.5px" width="14" height="12" viewBox="0 0 14 12"><ellipse cx="7.2" cy="4.7" rx="6.3" ry="4.3" fill="#111"/><path d="M2.8 7.5 L0.8 11 L5.8 8.6 Z" fill="#111"/></svg>
<svg style="position:absolute;left:1004.5px;top:321.5px" width="14" height="13" viewBox="0 0 14 13"><path d="M0.9 5.5 L0.9 12.1 L12.5 12.1 L12.5 5.5" stroke="#222" stroke-width="1.5" fill="none"/><path d="M6.7 9.6 L6.7 1.6 M3.6 4.6 L6.7 1.4 L9.8 4.6" stroke="#222" stroke-width="1.5" fill="none"/></svg>
<div style="left:0px;top:418.8px;width:997.5px;height:1.2px;background:#dadada;"></div>
</body></html>
